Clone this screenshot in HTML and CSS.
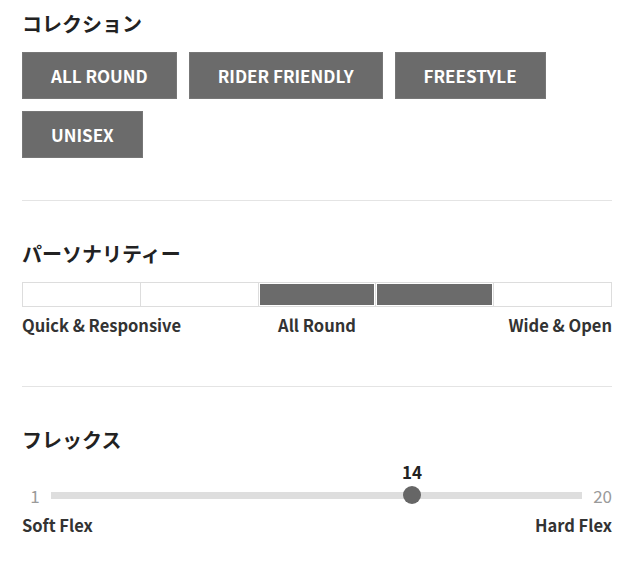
FILE: index.html
```html
<!DOCTYPE html>
<html>
<head>
    <meta charset="utf-8">
    <title>Board Spec</title>
    <link rel="stylesheet" href="styles.css">
</head>
<body>
    <div class="panel">
        <div class="block">
            <h2 class="block-title">コレクション</h2>
            <div class="tags">
                <span class="tag">ALL ROUND</span>
                <span class="tag">RIDER FRIENDLY</span>
                <span class="tag">FREESTYLE</span>
                <span class="tag">UNISEX</span>
            </div>
        </div>

        <hr class="divider">

        <div class="block">
            <h2 class="block-title">パーソナリティー</h2>
            <div class="scale">
                <div class="cell"></div>
                <div class="cell"></div>
                <div class="cell on"></div>
                <div class="cell on"></div>
                <div class="cell"></div>
            </div>
            <div class="scale-labels">
                <span>Quick &amp; Responsive</span>
                <span class="mid">All Round</span>
                <span class="end">Wide &amp; Open</span>
            </div>
        </div>

        <hr class="divider">

        <div class="block">
            <h2 class="block-title">フレックス</h2>
            <div class="range">
                <span class="range-min">1</span>
                <div class="track">
                    <div class="thumb" style="left: 68%;">
                        <span class="thumb-value">14</span>
                    </div>
                </div>
                <span class="range-max">20</span>
            </div>
            <div class="scale-labels two">
                <span>Soft Flex</span>
                <span class="end">Hard Flex</span>
            </div>
        </div>
    </div>
</body>
</html>
```

FILE: styles.css
```css
body {
    margin: 0;
    font-family: "Noto Sans CJK JP", "Noto Sans", sans-serif;
    color: #222;
    background-color: #fff;
}
.panel {
    width: 590px;
    margin-left: 22px;
    padding-top: 10px;
}
.block-title {
    font-size: 20px;
    font-weight: 700;
    line-height: 28px;
    margin: 0 0 14px 0;
}
.tags {
    display: flex;
    flex-wrap: wrap;
    gap: 12px;
}
.tag {
    display: block;
    height: 47px;
    line-height: 47px;
    padding: 0 29px;
    background-color: #6b6b6b;
    color: #fff;
    font-size: 17px;
    font-weight: 700;
    box-shadow: inset 0 0 0 1px #777;
}
.divider {
    border: none;
    border-top: 1px solid #e4e4e4;
    margin: 42px 0 39px 0;
}
.scale {
    display: flex;
    height: 25px;
}
.cell {
    flex: 1;
    border: 1px solid #ddd;
    margin-left: -1px;
}
.cell:first-child {
    margin-left: 0;
}
.cell.on {
    background-color: #6b6b6b;
    box-shadow: inset 0 0 0 1px #fff;
}
.scale-labels {
    display: grid;
    grid-template-columns: 1fr 1fr 1fr;
    margin-top: 5px;
    padding-bottom: 5px;
    font-size: 16.5px;
    font-weight: 700;
    line-height: 27px;
    color: #333;
}
.scale-labels .mid {
    text-align: center;
}
.scale-labels .end {
    text-align: right;
}
.scale-labels.two {
    grid-template-columns: 1fr 1fr;
    margin-top: 7px;
}
.range {
    display: flex;
    align-items: center;
    margin-top: 31px;
    height: 20px;
    font-size: 17px;
    color: #9a9a9a;
}
.range-min {
    width: 26px;
    text-align: center;
}
.range-max {
    width: 26px;
    text-align: right;
}
.track {
    position: relative;
    flex: 1;
    height: 7px;
    margin: 0 4px 0 3px;
    background-color: #dedede;
}
.thumb {
    position: absolute;
    top: 50%;
    width: 18px;
    height: 18px;
    margin: -9px 0 0 -9px;
    border-radius: 50%;
    background-color: #666;
}
.thumb-value {
    position: absolute;
    bottom: 22px;
    left: 50%;
    transform: translateX(-50%);
    font-weight: 700;
    color: #222;
    line-height: 20px;
}
```
